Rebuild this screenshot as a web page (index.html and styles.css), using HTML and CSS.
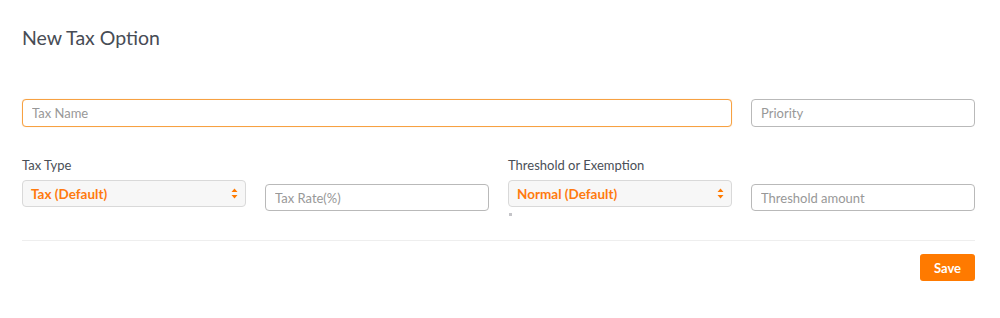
FILE: index.html
```html
<!DOCTYPE html>
<html>
<head>
<meta charset="utf-8">
<link rel="stylesheet" href="styles.css">
</head>
<body>
<div class="page">
  <h1 class="title">New Tax Option</h1>
  <div class="row row-top">
    <input class="field field-focus span3" type="text" placeholder="Tax Name">
    <input class="field" type="text" placeholder="Priority">
  </div>
  <div class="row row-second">
    <div class="group">
      <label class="label">Tax Type</label>
      <div class="select">
        <span class="select-value">Tax (Default)</span>
        <svg class="caret" width="7" height="11" viewBox="0 0 7 11"><path d="M3.5 0.5 L6.5 4 L0.5 4 Z M3.5 10.5 L6.5 7 L0.5 7 Z" fill="#ff7a00"/></svg>
      </div>
    </div>
    <div class="group group-nolabel">
      <input class="field field-short" type="text" placeholder="Tax Rate(%)">
    </div>
    <div class="group">
      <label class="label">Threshold or Exemption</label>
      <div class="select">
        <span class="select-value">Normal (Default)</span>
        <svg class="caret" width="7" height="11" viewBox="0 0 7 11"><path d="M3.5 0.5 L6.5 4 L0.5 4 Z M3.5 10.5 L6.5 7 L0.5 7 Z" fill="#ff7a00"/></svg>
      </div>
      <span class="dot"></span>
    </div>
    <div class="group group-nolabel">
      <input class="field field-short" type="text" placeholder="Threshold amount">
    </div>
  </div>
  <hr class="divider">
  <div class="actions">
    <button class="btn-save" type="button">Save</button>
  </div>
</div>
</body>
</html>
```
FILE: styles.css
```css
html, body {
  margin: 0;
  padding: 0;
  background: #ffffff;
}
body {
  font-family: Lato, "Open Sans", sans-serif;
  color: #4a4f57;
}
.page {
  width: 953px;
  margin-left: 22px;
  padding-top: 26px;
}
.title {
  margin: 0;
  font-size: 19.5px;
  line-height: 24px;
  font-weight: 400;
  color: #474c55;
}
.row {
  display: grid;
  grid-template-columns: repeat(4, 1fr);
  column-gap: 19px;
}
.row-top {
  margin-top: 49px;
}
.span3 {
  grid-column: span 3;
}
.field {
  box-sizing: border-box;
  width: 100%;
  height: 28px;
  margin: 0;
  padding: 0 9px;
  border: 1px solid #b9b9b9;
  border-radius: 4px;
  font-family: Lato, "Open Sans", sans-serif;
  font-size: 13px;
  color: #555;
  background: #fff;
  outline: none;
}
.field-short {
  height: 27px;
}
.field::placeholder {
  color: #989898;
}
.field-focus {
  border-color: #f7a142;
  box-shadow: 0 0 1px rgba(247, 161, 66, 0.5);
}
.row-second {
  margin-top: 30px;
  align-items: start;
}
.group {
  display: flex;
  flex-direction: column;
}
.group-nolabel {
  padding-top: 27px;
}
.label {
  font-size: 13px;
  line-height: 17px;
  margin-bottom: 6px;
  color: #4a4f57;
}
.select {
  box-sizing: border-box;
  height: 27px;
  border: 1px solid #d9d9d9;
  border-radius: 4px;
  background: #f7f7f7;
  display: flex;
  align-items: center;
  justify-content: space-between;
  padding: 0 7px 0 8px;
}
.select-value {
  font-size: 13.5px;
  font-weight: 700;
  color: #ff7a0f;
}
.caret {
  display: block;
}
.dot {
  width: 3px;
  height: 3px;
  background: #c4c4c8;
  margin-top: 6px;
  margin-left: 1px;
}
.divider {
  margin: 24px 0 0 0;
  border: 0;
  border-top: 1px solid #eeeeee;
  height: 0;
}
.actions {
  display: flex;
  justify-content: flex-end;
  margin-top: 13px;
}
.btn-save {
  width: 55px;
  height: 27px;
  border: 0;
  border-radius: 3px;
  background: #ff7a00;
  color: #fff;
  font-family: Lato, "Open Sans", sans-serif;
  font-size: 13px;
  font-weight: 700;
  padding: 0;
}
```
